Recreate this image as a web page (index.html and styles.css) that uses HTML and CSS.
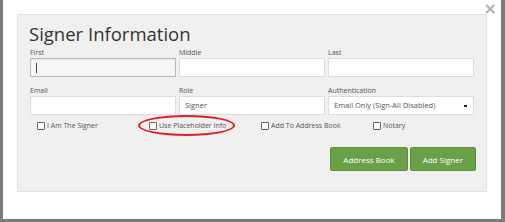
FILE: index.html
```html
<!DOCTYPE html>
<html lang="en">
<head>
  <meta charset="UTF-8" />
  <title>Signer Information</title>
  <link rel="stylesheet" href="styles.css">
</head>
<body>

<div class="modal">
  <button class="close-button">&times;</button>
  <div class="panel">
    <h2>Signer Information</h2>

    <div class="field-grid">
      <div class="field">
        <label>First</label>
        <div class="input focused"><span class="caret"></span></div>
      </div>
      <div class="field">
        <label>Middle</label>
        <div class="input"></div>
      </div>
      <div class="field">
        <label>Last</label>
        <div class="input"></div>
      </div>
      <div class="field">
        <label>Email</label>
        <div class="input"></div>
      </div>
      <div class="field">
        <label>Role</label>
        <div class="input">Signer</div>
      </div>
      <div class="field">
        <label>Authentication</label>
        <div class="input select">Email Only (Sign-All Disabled)<span class="arrow"></span></div>
      </div>
    </div>

    <div class="check-row">
      <label class="check"><span class="box"></span>I Am The Signer</label>
      <label class="check highlighted"><span class="box"></span>Use Placeholder Info<span class="ring"></span></label>
      <label class="check"><span class="box"></span>Add To Address Book</label>
      <label class="check"><span class="box"></span>Notary</label>
    </div>

    <div class="actions">
      <button class="btn">Address Book</button>
      <button class="btn">Add Signer</button>
    </div>
  </div>
</div>

</body>
</html>
```

FILE: styles.css
```css
body {
  margin: 0;
  font-family: 'Open Sans', sans-serif;
  background-color: #7b7b7b;
  color: #555;
  width: 505px;
  height: 222px;
  overflow: hidden;
}

.modal {
  position: relative;
  margin-left: 3px;
  width: 498px;
  height: 219px;
  background-color: #fff;
  box-sizing: border-box;
  padding: 14px 14px 0 14px;
}

.close-button {
  position: absolute;
  top: 2px;
  right: 4px;
  font-size: 16px;
  line-height: 14px;
  font-weight: bold;
  color: #b0b0b0;
  background: none;
  border: none;
  padding: 0;
  font-family: 'DejaVu Sans', sans-serif;
  cursor: pointer;
}

.panel {
  width: 470px;
  height: 178px;
  box-sizing: border-box;
  background-color: #f0f0f0;
  border: 1px solid #e2e2e2;
  padding: 5px 12px 0 12px;
}

.panel h2 {
  margin: 0 0 0 -1px;
  font-size: 18.5px;
  font-weight: normal;
  line-height: 27px;
  color: #333;
}

.field-grid {
  display: grid;
  grid-template-columns: repeat(3, 1fr);
  column-gap: 3px;
  row-gap: 8px;
}

.field label {
  display: block;
  font-size: 7px;
  line-height: 11px;
  color: #555;
}

.input {
  position: relative;
  height: 19px;
  box-sizing: border-box;
  background-color: #fff;
  border: 1px solid #ddd;
  font-size: 7.5px;
  line-height: 17px;
  padding-left: 5px;
  color: #555;
}

.input.focused {
  background-color: #f7f7f7;
  border-color: #bbb;
  box-shadow: inset 0 1px 1px rgba(0, 0, 0, 0.08);
}

.caret {
  display: inline-block;
  width: 1px;
  height: 10px;
  margin-top: 4px;
  vertical-align: top;
  background-color: #444;
}

.select .arrow {
  position: absolute;
  right: 6px;
  top: 8px;
  width: 3px;
  height: 2px;
  background-color: #222;
}

.check-row {
  display: grid;
  grid-template-columns: repeat(4, 112px);
  padding-left: 7px;
  margin-top: 5px;
}

.check {
  position: relative;
  display: flex;
  align-items: center;
  font-size: 7px;
  line-height: 12px;
  color: #555;
}

.box {
  width: 6px;
  height: 6px;
  border: 1px solid #666;
  border-radius: 1px;
  background-color: #fff;
  margin-right: 2px;
}

.ring {
  position: absolute;
  left: -11px;
  top: -5px;
  width: 93px;
  height: 17px;
  border: 2px solid #d9232b;
  border-radius: 50%;
}

.actions {
  display: flex;
  justify-content: flex-end;
  gap: 2px;
  margin-top: 15px;
  margin-right: -2px;
}

.btn {
  height: 24px;
  padding: 0 12px;
  font-family: 'Open Sans', sans-serif;
  font-size: 8px;
  color: #fff;
  background-color: #6aa047;
  border: 1px solid #5e913d;
  border-radius: 2px;
}
```
